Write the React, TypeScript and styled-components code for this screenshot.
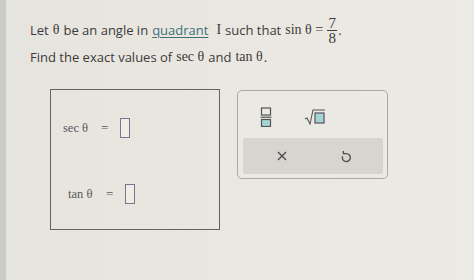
import React from 'react';
import styled, { createGlobalStyle } from 'styled-components';

const GlobalStyle = createGlobalStyle`
    html, body {
        margin: 0;
        padding: 0;
        background: #e8e5de;
    }
`;

const Page = styled.div`
    box-sizing: border-box;
    width: 474px;
    height: 280px;
    overflow: hidden;
    padding: 16px 0 0 24px;
    border-left: 6px solid #cbccc8;
    background: linear-gradient(90deg, #e6e4de 0%, #ebe8e1 60%, #eceae5 100%);
    font-family: 'Open Sans', 'Noto Sans', sans-serif;
    color: #3b3b3b;
`;

const Line = styled.div`
    display: flex;
    align-items: center;
    font-size: 13px;
    height: 28px;
    white-space: nowrap;
`;

const SecondLine = styled(Line)`
    margin-top: -1px;
`;

const Link = styled.span`
    color: #3f6f7a;
    text-decoration: underline;
    text-underline-offset: 2px;
    margin: 0 4px;
`;

const Math = styled.span<{ $tight?: boolean }>`
    font-family: 'Liberation Serif', 'DejaVu Serif', serif;
    font-size: 14px;
    margin: 0 ${(p) => (p.$tight ? 1 : 4)}px 0 4px;
    display: inline-flex;
    align-items: center;
`;

const Fraction = styled.span`
    display: inline-flex;
    flex-direction: column;
    align-items: center;
    margin-left: 4px;
    line-height: 12px;
    font-size: 15px;
`;

const Bar = styled.span`
    width: 10px;
    height: 1px;
    background: #3b3b3b;
    margin: 1px 0;
`;

const WorkArea = styled.div`
    display: flex;
    align-items: flex-start;
    gap: 17px;
    margin: 18px 0 0 20px;
`;

const AnswerBox = styled.div`
    box-sizing: border-box;
    width: 170px;
    height: 141px;
    border: 1.5px solid #66635d;
    display: flex;
    flex-direction: column;
    padding: 27px 0 0 12px;
    gap: 44px;
`;

const Row = styled.div<{ $indent: number }>`
    display: flex;
    align-items: center;
    padding-left: ${(p) => p.$indent}px;
    font-family: 'Liberation Serif', 'DejaVu Serif', serif;
    font-size: 12.5px;
    color: #595959;
    height: 22px;
`;

const Label = styled.span`
    width: 38px;
`;

const Equals = styled.span`
    width: 19px;
    font-size: 13px;
`;

const InputSlot = styled.span`
    box-sizing: border-box;
    width: 10px;
    height: 20px;
    border: 1.5px solid #77758c;
    background: #efede8;
`;

const Toolbar = styled.div`
    box-sizing: border-box;
    width: 151px;
    height: 89px;
    margin-top: 1px;
    border: 1px solid #aaa8a3;
    border-radius: 5px;
    padding: 4px 4px 4px 5px;
    display: flex;
    flex-direction: column;
    background: #ebe9e4;
`;

const ToolRow = styled.div`
    display: flex;
    align-items: center;
    height: 43px;
    padding-left: 17px;
    gap: 32px;
`;

const ActionRow = styled.div`
    flex: 1;
    display: flex;
    align-items: center;
    justify-content: space-between;
    padding: 0 31px 0 33px;
    background: #d7d5d0;
    border-radius: 2px;
    color: #4a4a4a;
`;

const IconButton = styled.span`
    display: inline-flex;
    align-items: center;
    justify-content: center;
`;

const FractionIcon = () => (
    <svg width="12" height="20" viewBox="0 0 12 20">
        <rect x="1.5" y="1" width="9" height="7" fill="none" stroke="#555" strokeWidth="1.2" />
        <line x1="0.5" y1="10.2" x2="11.5" y2="10.2" stroke="#555" strokeWidth="1.2" />
        <rect x="1.5" y="12.5" width="9" height="7" fill="#a6d3d6" stroke="#555" strokeWidth="1.2" />
    </svg>
);

const SqrtIcon = () => (
    <svg width="22" height="16" viewBox="0 0 22 16">
        <path d="M1 10 L3 9 L6 15 L9 1 L21 1" fill="none" stroke="#555" strokeWidth="1.1" />
        <rect x="11" y="4" width="9" height="10" fill="#a6d3d6" stroke="#555" strokeWidth="1.2" />
    </svg>
);

const CloseIcon = () => (
    <svg width="12" height="12" viewBox="0 0 12 12">
        <path d="M2 2 L10 10 M10 2 L2 10" stroke="#4a4a4a" strokeWidth="1.3" />
    </svg>
);

const UndoIcon = () => (
    <svg width="12" height="13" viewBox="0 0 12 13">
        <path d="M2.6 6.2 A4 4 0 1 0 6.4 3.6" fill="none" stroke="#4a4a4a" strokeWidth="1.3" />
        <path d="M6.6 3.6 L3.4 3.6 L3.4 1" fill="none" stroke="#4a4a4a" strokeWidth="1.3" />
    </svg>
);

const App = () => (
    <>
        <GlobalStyle />
        <Page>
            <Line>
                Let<Math>θ</Math>be an angle in<Link>quadrant</Link>
                <Math>I</Math>such that
                <Math $tight>
                    sin θ =
                    <Fraction>
                        <span>7</span>
                        <Bar />
                        <span>8</span>
                    </Fraction>
                </Math>
                .
            </Line>
            <SecondLine>
                Find the exact values of<Math>sec θ</Math>and<Math $tight>tan θ</Math>.
            </SecondLine>
            <WorkArea>
                <AnswerBox>
                    <Row $indent={0}>
                        <Label>sec θ</Label>
                        <Equals>=</Equals>
                        <InputSlot />
                    </Row>
                    <Row $indent={5}>
                        <Label>tan θ</Label>
                        <Equals>=</Equals>
                        <InputSlot />
                    </Row>
                </AnswerBox>
                <Toolbar>
                    <ToolRow>
                        <IconButton>
                            <FractionIcon />
                        </IconButton>
                        <IconButton>
                            <SqrtIcon />
                        </IconButton>
                    </ToolRow>
                    <ActionRow>
                        <IconButton>
                            <CloseIcon />
                        </IconButton>
                        <IconButton>
                            <UndoIcon />
                        </IconButton>
                    </ActionRow>
                </Toolbar>
            </WorkArea>
        </Page>
    </>
);

export default App;
